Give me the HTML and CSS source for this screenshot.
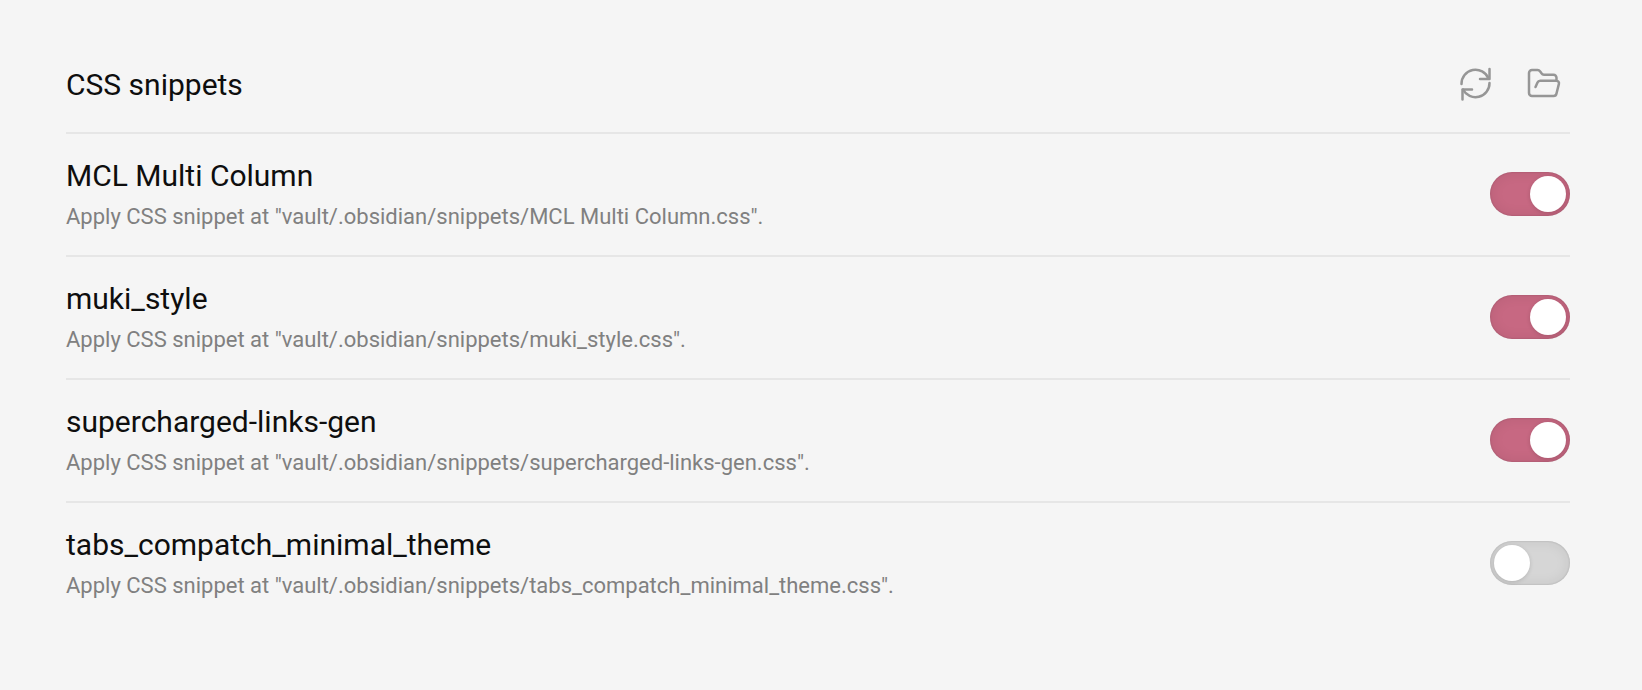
FILE: index.html
```html
<!DOCTYPE html>
<html lang="en">

<head>
    <meta charset="UTF-8">
    <meta name="viewport" content="width=device-width, initial-scale=1.0">
    <title>CSS snippets</title>
    <link rel="stylesheet" href="styles.css">
</head>

<body>
    <main class="settings">
        <header class="heading">
            <h1>CSS snippets</h1>
            <div class="actions">
                <button type="button" class="icon-button" aria-label="Reload snippets">
                    <svg viewBox="0 0 36 36" stroke-width="2.5">
                        <path d="M3.5 17A14 14 0 0 1 30.5 11.5" />
                        <path d="M31.5 2v10H22" />
                        <path d="M31.5 16A14 14 0 0 1 5 22.5" />
                        <path d="M4.5 32.5v-10H14" />
                    </svg>
                </button>
                <button type="button" class="icon-button" aria-label="Open snippets folder">
                    <svg viewBox="0 0 36 36" stroke-width="2.5">
                        <path d="M9.5 20l2-4.5a3 3 0 0 1 2.7-1.8H30.5a2.5 2.5 0 0 1 2.4 3.2l-2.4 9.6a3 3 0 0 1-3 2.5H6a3 3 0 0 1-3-3V6a3 3 0 0 1 3-3h5.5a3 3 0 0 1 2.5 1.3l1.5 2a3 3 0 0 0 2.5 1.4h9.5a3 3 0 0 1 3 3v3" />
                    </svg>
                </button>
            </div>
        </header>

        <div class="item">
            <div class="info">
                <label class="name" for="mcl">MCL Multi Column</label>
                <p class="description">Apply CSS snippet at "vault/.obsidian/snippets/MCL Multi Column.css".</p>
            </div>
            <input type="checkbox" class="toggle" id="mcl" checked>
        </div>

        <div class="item">
            <div class="info">
                <label class="name" for="muki">muki_style</label>
                <p class="description">Apply CSS snippet at "vault/.obsidian/snippets/muki_style.css".</p>
            </div>
            <input type="checkbox" class="toggle" id="muki" checked>
        </div>

        <div class="item">
            <div class="info">
                <label class="name" for="links">supercharged-links-gen</label>
                <p class="description">Apply CSS snippet at "vault/.obsidian/snippets/supercharged-links-gen.css".</p>
            </div>
            <input type="checkbox" class="toggle" id="links" checked>
        </div>

        <div class="item">
            <div class="info">
                <label class="name" for="tabs">tabs_compatch_minimal_theme</label>
                <p class="description">Apply CSS snippet at "vault/.obsidian/snippets/tabs_compatch_minimal_theme.css".</p>
            </div>
            <input type="checkbox" class="toggle" id="tabs">
        </div>
    </main>
</body>

</html>
```
FILE: styles.css
```css
body {
    font-family: Roboto, sans-serif;
    margin: 0;
    background-color: #f5f5f5;
    color: #0e0e0e;
}

.settings {
    padding: 61px 72px 60px 66px;
}

.heading {
    display: flex;
    justify-content: space-between;
    align-items: center;
    padding-bottom: 23px;
}

h1 {
    margin: 0;
    font-size: 30px;
    line-height: 48px;
    font-weight: 400;
}

.actions {
    display: flex;
    gap: 32px;
    padding-right: 8px;
}

.icon-button {
    display: block;
    padding: 0;
    border: none;
    background: none;
    color: #969696;
    cursor: pointer;
}

.icon-button svg {
    display: block;
    width: 36px;
    height: 36px;
    fill: none;
    stroke: currentColor;
    stroke-linecap: round;
    stroke-linejoin: round;
}

.item {
    display: flex;
    justify-content: space-between;
    align-items: center;
    padding: 22px 0 23px;
    border-top: 2px solid #e6e6e6;
}

.name {
    display: block;
    font-size: 30px;
    line-height: 40px;
}

.description {
    margin: 6px 0 0;
    font-size: 22px;
    line-height: 30px;
    color: #808080;
}

.toggle {
    appearance: none;
    flex: none;
    box-sizing: border-box;
    width: 80px;
    height: 44px;
    margin: 0;
    padding: 4px;
    border-radius: 22px;
    background-color: #d6d6d6;
    box-shadow: inset 0 0 14px rgba(0, 0, 0, 0.08), inset 0 0 2px rgba(0, 0, 0, 0.2);
    cursor: pointer;
}

.toggle::before {
    content: "";
    display: block;
    width: 36px;
    height: 36px;
    border-radius: 50%;
    background-color: #fff;
    box-shadow: 0 1px 4px rgba(0, 0, 0, 0.15);
}

.toggle:checked {
    background-color: #c76882;
}

.toggle:checked::before {
    margin-left: auto;
}
```
